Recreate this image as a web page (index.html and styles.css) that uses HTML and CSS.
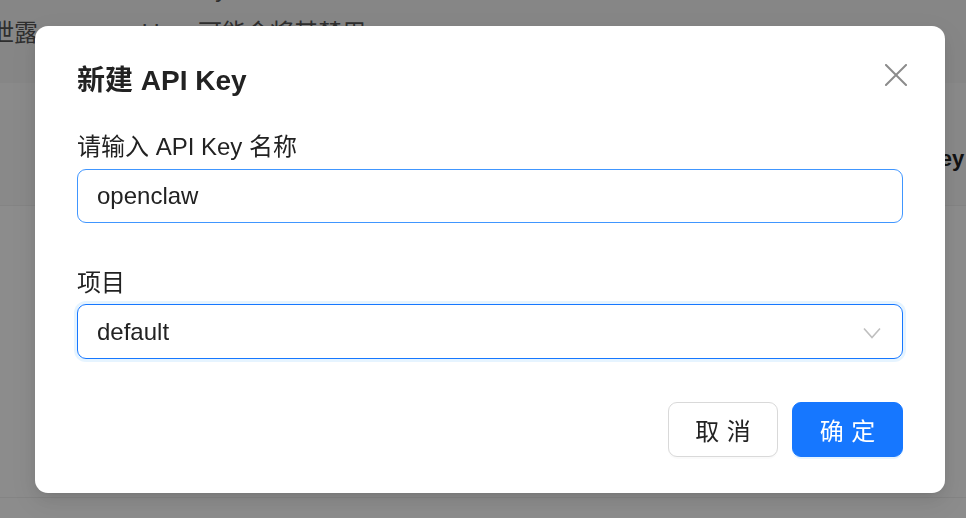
FILE: index.html
```html
<!DOCTYPE html>
<html lang="zh-CN">
<head>
<meta charset="utf-8">
<title>新建 API Key</title>
<link rel="stylesheet" href="styles.css">
</head>
<body>
<div class="page">
  <div class="notice">
    <p class="notice-line">妥善保管您的 API Key</p>
    <p class="notice-line">泄露，your api key 可能会将其禁用。</p>
  </div>
  <div class="card">
    <div class="card-top"></div>
    <div class="table-head">
      <div class="th"></div>
      <div class="th">项目</div>
      <div class="th">API Key</div>
    </div>
    <div class="table-body"></div>
  </div>
</div>

<div class="mask">
  <div class="modal" role="dialog">
    <div class="modal-header">
      <h2 class="modal-title">新建 API Key</h2>
      <button class="close" aria-label="关闭">
        <svg width="22" height="22" viewBox="0 0 22 22"><path d="M1 1L21 21M21 1L1 21" stroke="#8c8c8c" stroke-width="2" fill="none" stroke-linecap="square"/></svg>
      </button>
    </div>
    <div class="field field-name">
      <label class="label">请输入 API Key 名称</label>
      <div class="input">openclaw</div>
    </div>
    <div class="field field-project">
      <label class="label">项目</label>
      <div class="select">
        <span class="select-value">default</span>
        <svg class="chevron" width="18" height="12" viewBox="0 0 18 12"><path d="M1 1.5L9 10.5L17 1.5" stroke="#bfbfbf" stroke-width="1.6" fill="none"/></svg>
      </div>
    </div>
    <div class="footer">
      <button class="btn btn-default"><span class="btn-text">取消</span></button>
      <button class="btn btn-primary"><span class="btn-text">确定</span></button>
    </div>
  </div>
</div>
</body>
</html>
```

FILE: styles.css
```css
html, body {
  margin: 0;
  padding: 0;
  width: 966px;
  height: 518px;
  overflow: hidden;
}
body {
  font-family: "Liberation Sans", "Noto Sans CJK SC", sans-serif;
  color: rgba(0, 0, 0, 0.88);
  background: #f5f5f5;
}
.page {
  width: 966px;
  height: 518px;
  display: flex;
  flex-direction: column;
}
.notice {
  height: 83px;
  overflow: hidden;
}
.notice-line {
  margin: 0;
  font-size: 24px;
  line-height: 44px;
  white-space: nowrap;
  color: #555;
  text-indent: -10px;
}
.notice-line:first-child {
  margin-top: -33px;
}
.card {
  background: #ffffff;
  flex: 1;
  display: flex;
  flex-direction: column;
}
.card-top {
  height: 27px;
  background: #fcfcfc;
}
.table-head {
  height: 95px;
  background: #fafafa;
  border-bottom: 1px solid #f0f0f0;
  display: grid;
  grid-template-columns: 440px 441px 200px;
  align-items: center;
}
.th {
  font-size: 22px;
  font-weight: bold;
  color: #222;
  white-space: nowrap;
  padding-top: 2px;
}
.table-body {
  height: 291px;
  border-bottom: 1px solid #f0f0f0;
}

.mask {
  position: fixed;
  inset: 0;
  background: rgba(0, 0, 0, 0.45);
  padding: 26px 21px 0 35px;
}
.modal {
  width: 910px;
  height: 467px;
  box-sizing: border-box;
  background: #fff;
  border-radius: 13px;
  padding: 35px 42px 36px 42px;
  box-shadow: 0 6px 16px 0 rgba(0,0,0,0.08), 0 3px 6px -4px rgba(0,0,0,0.12), 0 9px 28px 8px rgba(0,0,0,0.05);
  display: flex;
  flex-direction: column;
}
.modal-header {
  display: flex;
  justify-content: space-between;
  align-items: center;
  height: 39px;
}
.modal-title {
  margin: 0;
  font-size: 28px;
  line-height: 39px;
  font-weight: bold;
  color: #222;
}
.close {
  border: 0;
  background: none;
  padding: 0;
  width: 22px;
  height: 22px;
  margin-right: -4px;
  margin-bottom: 12px;
  display: flex;
}
.field {
  display: flex;
  flex-direction: column;
}
.field-name {
  margin-top: 29px;
}
.field-project {
  margin-top: 42px;
}
.label {
  font-size: 24px;
  line-height: 36px;
  color: #222;
  margin-bottom: 4px;
}
.field-project .label {
  margin-bottom: 3px;
}
.input, .select {
  box-sizing: border-box;
  height: 54px;
  border-radius: 9px;
  font-size: 24px;
  color: #222;
  padding: 0 19px;
  display: flex;
  align-items: center;
}
.input {
  border: 1px solid #4096ff;
}
.select {
  height: 55px;
  border: 1px solid #1677ff;
  box-shadow: 0 0 0 3px rgba(5, 145, 255, 0.1);
  justify-content: space-between;
}
.chevron {
  margin-right: 2px;
  margin-top: 2px;
}
.footer {
  margin-top: auto;
  display: flex;
  justify-content: flex-end;
  gap: 14px;
}
.btn {
  height: 55px;
  border-radius: 9px;
  font-family: "Liberation Sans", "Noto Sans CJK SC", sans-serif;
  font-size: 24px;
  padding: 0;
  display: flex;
  align-items: center;
  justify-content: center;
}
.btn-text {
  letter-spacing: 0.32em;
  margin-right: -0.32em;
}
.btn-default {
  width: 110px;
  background: #fff;
  border: 1px solid #d9d9d9;
  color: #222;
  box-shadow: 0 2px 0 rgba(0, 0, 0, 0.02);
}
.btn-primary {
  width: 111px;
  background: #1677ff;
  border: 1px solid #1677ff;
  color: #fff;
  box-shadow: 0 2px 0 rgba(5, 145, 255, 0.1);
}
```
